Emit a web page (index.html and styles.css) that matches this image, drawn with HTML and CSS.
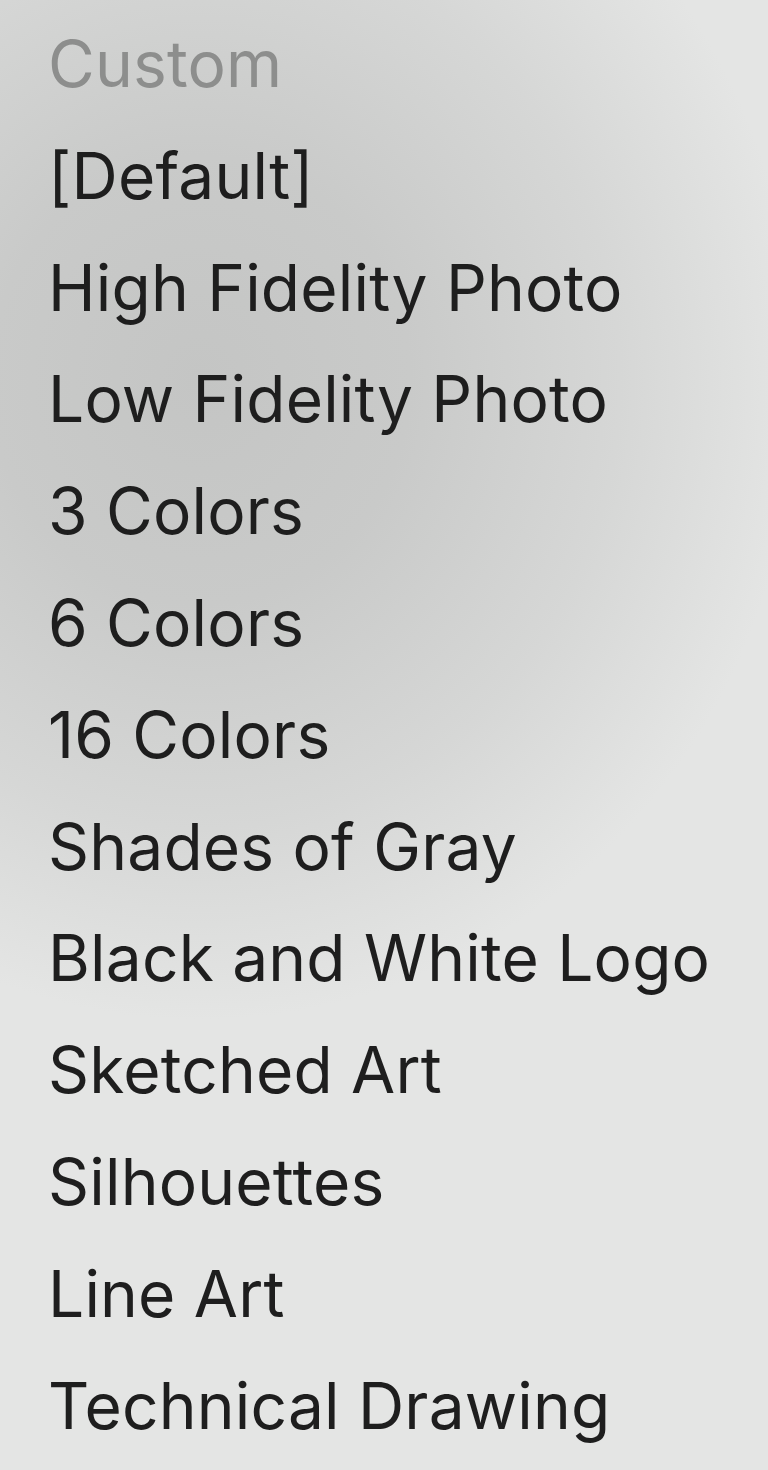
FILE: index.html
```html
<!DOCTYPE html>
<html>
<head>
<meta charset="utf-8">
<link rel="stylesheet" href="styles.css">
</head>
<body>
<div class="menu">
  <div class="item header">Custom</div>
  <div class="item">[Default]</div>
  <div class="item">High Fidelity Photo</div>
  <div class="item">Low Fidelity Photo</div>
  <div class="item">3 Colors</div>
  <div class="item">6 Colors</div>
  <div class="item">16 Colors</div>
  <div class="item">Shades of Gray</div>
  <div class="item">Black and White Logo</div>
  <div class="item">Sketched Art</div>
  <div class="item">Silhouettes</div>
  <div class="item">Line Art</div>
  <div class="item">Technical Drawing</div>
</div>
</body>
</html>
```
FILE: styles.css
```css
html, body {
  margin: 0;
  padding: 0;
}
body {
  width: 768px;
  height: 1470px;
  overflow: hidden;
  background:
    radial-gradient(ellipse 600px 640px at 200px 380px, #c4c5c4 0%, #c9cac9 35%, #d6d7d6 70%, #e4e5e4 100%);
  background-color: #e5e6e5;
  font-family: Inter, "Liberation Sans", sans-serif;
}
.menu {
  display: flex;
  flex-direction: column;
  padding: 8px 0 0 48px;
}
.item {
  font-size: 64px;
  line-height: 111.8px;
  height: 111.8px;
  color: #1e1e1e;
  letter-spacing: 0.2px;
  white-space: nowrap;
}
.item.header {
  color: #8d8e8d;
}
```
